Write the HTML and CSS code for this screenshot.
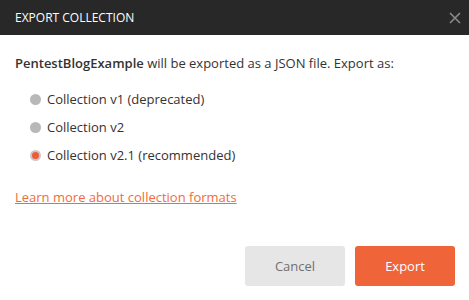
FILE: index.html
```html
<!DOCTYPE html>
<html>
<head>
<meta charset="utf-8">
<link rel="stylesheet" href="styles.css">
</head>
<body>
<div class="modal">
  <div class="header">
    <span class="title">EXPORT COLLECTION</span>
    <svg class="close" width="12" height="12" viewBox="0 0 12 12"><path d="M1 1L11 11M11 1L1 11" stroke="#8a8a8a" stroke-width="1.6" fill="none"/></svg>
  </div>
  <div class="body">
    <p class="intro"><b>PentestBlogExample</b> will be exported as a JSON file. Export as:</p>
    <div class="options">
      <label class="option"><span class="radio"></span>Collection v1 (deprecated)</label>
      <label class="option"><span class="radio"></span>Collection v2</label>
      <label class="option"><span class="radio checked"></span>Collection v2.1 (recommended)</label>
    </div>
    <a class="link" href="#">Learn more about collection formats</a>
  </div>
  <div class="footer">
    <button class="btn cancel">Cancel</button>
    <button class="btn export">Export</button>
  </div>
</div>
</body>
</html>
```
FILE: styles.css
```css
html, body { margin: 0; padding: 0; background: #fff; }
body { font-family: "Open Sans", "Noto Sans", sans-serif; font-size: 13px; color: #333; }
.modal { width: 469px; height: 300px; display: flex; flex-direction: column; }
.header { height: 35px; background: #282828; display: flex; align-items: center; justify-content: space-between; padding: 0 8px 0 15px; box-sizing: border-box; }
.title { color: #fff; font-size: 12px; }
.body { padding: 19px 15px 0 15px; }
.intro { margin: 0; line-height: 18px; }
.intro b { font-weight: 600; }
.options { padding: 18px 0 0 15px; display: flex; flex-direction: column; gap: 10px; }
.option { display: flex; align-items: center; height: 18px; }
.radio { width: 11px; height: 11px; border-radius: 50%; background: #b8b8b8; margin-right: 6px; box-sizing: border-box; }
.radio.checked { background: #f05a35; border: 2px solid #c8c8c8; }
.link { display: inline-block; margin-top: 24px; color: #f26b3a; text-decoration: underline; line-height: 18px; }
.footer { display: flex; justify-content: flex-end; gap: 10px; padding: 0 14px 0 0; margin-top: auto; margin-bottom: 14px; }
.btn { width: 100px; height: 40px; border: none; border-radius: 3px; font-family: inherit; font-size: 13px; }
.cancel { background: #e6e6e6; color: #707070; }
.export { background: #f0643a; color: #fff; }
```
